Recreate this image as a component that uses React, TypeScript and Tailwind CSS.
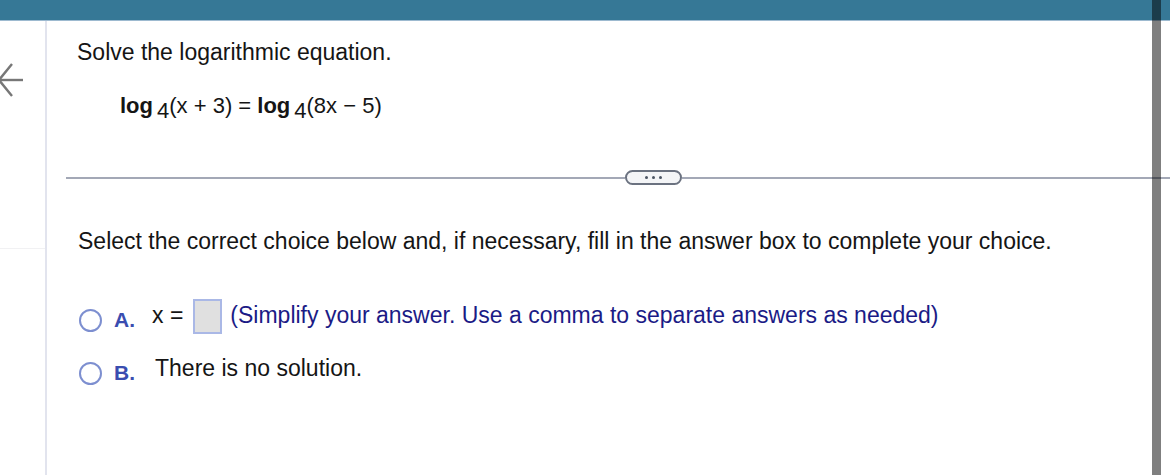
import { ReactNode } from 'react'

function Radio({ letter, children }: { letter: string; children: ReactNode }) {
  return (
    <div className="flex items-start h-[36px]">
      <span className="mt-[10px] w-[23px] h-[23px] rounded-full border-2 border-[#7d8fd0] bg-white shrink-0" />
      <span className="mt-[9px] ml-[12px] w-[38px] font-bold text-[#3a4db0] text-[21px] leading-[24px]">{letter}</span>
      {children}
    </div>
  )
}

export default function App() {
  return (
    <div
      className="relative h-[475px] w-[1170px] overflow-hidden bg-white text-[#151515]"
      style={{ fontFamily: '"Liberation Sans", Arial, sans-serif' }}
    >
      {/* top bar */}
      <div className="h-[21px] bg-[#367896] border-b border-[#9dbad0]" />

      <div className="flex h-[454px]">
        {/* left rail */}
        <div className="w-[47px] shrink-0 border-r-2 border-[#e2e4ee] flex flex-col">
          <div className="h-[228px] border-b border-[#f1f1f3] pt-[41px]">
            <svg width="26" height="36" viewBox="0 0 26 36" fill="none" stroke="#777" strokeWidth="2.4">
              <path d="M-1 18 H23" />
              <path d="M12 2 L-1 18 L12 34" />
            </svg>
          </div>
        </div>

        {/* main */}
        <div className="flex-1 flex flex-col">
          <div className="pl-[30px] pt-[18px]">
            <p className="text-[23px] leading-[26px]">Solve the logarithmic equation.</p>
            <p className="mt-[28px] ml-[43px] text-[22px] leading-[25px] whitespace-pre">
              <span className="font-bold">log</span>
              <span className="relative top-[5px] ml-[4px]">4</span>
              <span>(x + 3) = </span>
              <span className="font-bold">log</span>
              <span className="relative top-[5px] ml-[4px]">4</span>
              <span>(8x − 5)</span>
            </p>
          </div>

          {/* divider */}
          <div className="mt-[52px] ml-[19px] flex items-center">
            <div className="w-[559px] h-[2px] bg-[#a3a8b6]" />
            <button className="w-[57px] h-[15px] rounded-full border-2 border-[#6b7280] bg-[#f4f5f7] flex items-center justify-center gap-[4px]">
              <span className="w-[3px] h-[3px] rounded-full bg-[#4b5563]" />
              <span className="w-[3px] h-[3px] rounded-full bg-[#4b5563]" />
              <span className="w-[3px] h-[3px] rounded-full bg-[#4b5563]" />
            </button>
            <div className="flex-1 h-[2px] bg-[#a3a8b6]" />
          </div>

          <div className="pl-[31px]">
            <p className="mt-[43px] text-[23px] leading-[26px]">
              Select the correct choice below and, if necessary, fill in the answer box to complete your choice.
            </p>

            <div className="mt-[45px] ml-[1px] flex flex-col gap-[17px]">
              <Radio letter="A.">
                <span className="mt-[3px] text-[23px] leading-[26px]">x =</span>
                <span className="ml-[10px] w-[29px] h-[35px] bg-[#e0e0e0] border-2 border-[#aab8e6]" />
                <span className="mt-[3px] ml-[8px] text-[23px] leading-[26px] text-[#1b1b86]">
                  (Simplify your answer. Use a comma to separate answers as needed)
                </span>
              </Radio>
              <Radio letter="B.">
                <span className="mt-[3px] ml-[3px] text-[23px] leading-[26px]">There is no solution.</span>
              </Radio>
            </div>
          </div>
        </div>
      </div>

      {/* overlay scrollbar */}
      <div className="absolute top-0 left-[1152px] w-[9px] h-full bg-black/50" />
    </div>
  )
}
